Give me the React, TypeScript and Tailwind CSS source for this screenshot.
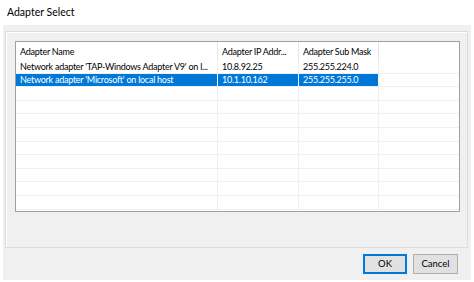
const columns = [
  { title: 'Adapter Name', width: 'w-[202px]' },
  { title: 'Adapter IP Addr...', width: 'w-[81px]' },
  { title: 'Adapter Sub Mask', width: 'w-[80px]' },
];

const rows = [
  ["Network adapter 'TAP-Windows Adapter V9' on l...", '10.8.92.25', '255.255.224.0'],
  ["Network adapter 'Microsoft' on local host", '10.1.10.162', '255.255.255.0'],
];

const widths = ['w-[202px]', 'w-[81px]', 'w-[80px]'];

const App = () => {
  const emptyRows = Array.from({ length: 10 });

  return (
    <div
      className="w-[474px] h-[282px] bg-white flex flex-col overflow-hidden text-black"
      style={{ fontFamily: 'Lato, "Noto Sans", sans-serif' }}
    >
      <div className="h-[25px] shrink-0 flex items-center pl-[7px] text-[10.5px]">Adapter Select</div>

      <div className="mx-[3px] h-[255px] bg-[#f0f0f0] flex flex-col">
        <div className="mt-[6px] ml-[2px] mr-[3px] h-[217px] border border-[#dcdcdc] shadow-[inset_1px_1px_0_#ffffff] pt-[9px] pl-[9px] pr-[7px]">
          <div className="h-[171px] bg-white border border-[#a0a0a0] overflow-hidden text-[9px] tracking-[-0.25px] leading-none">
            {/* header */}
            <div className="flex h-[18px]">
              {columns.map((c) => (
                <div
                  key={c.title}
                  className={`${c.width} shrink-0 border-r border-[#e5e5e5] flex items-center pl-[4px] whitespace-nowrap overflow-hidden`}
                >
                  {c.title}
                </div>
              ))}
              <div className="flex-1" />
            </div>

            {rows.map((r, i) => {
              const selected = i === 1;
              return (
                <div key={i} className="flex h-[13.6px] border-b border-[#f0f0f0]">
                  {r.map((cell, j) => (
                    <div
                      key={j}
                      className={`${widths[j]} shrink-0 border-r flex items-center pl-[4px] whitespace-nowrap overflow-hidden ${
                        selected ? 'bg-[#0078d7] text-white border-white' : 'border-[#f0f0f0]'
                      }`}
                    >
                      {cell}
                    </div>
                  ))}
                  <div className="flex-1" />
                </div>
              );
            })}

            {emptyRows.map((_, i) => (
              <div key={i} className="flex h-[13.6px] border-b border-[#f0f0f0]">
                {widths.map((w, j) => (
                  <div key={j} className={`${w} shrink-0 border-r border-[#f0f0f0]`} />
                ))}
                <div className="flex-1" />
              </div>
            ))}
          </div>
        </div>

        <div className="flex justify-end gap-[6px] mt-[6px] mr-[13px] text-[9.5px]">
          <button className="w-[44px] h-[20px] bg-[#e1e1e1] border-2 border-[#0078d7] flex items-center justify-center">
            OK
          </button>
          <button className="w-[45px] h-[20px] bg-[#e1e1e1] border border-[#adadad] flex items-center justify-center">
            Cancel
          </button>
        </div>
      </div>
    </div>
  );
};

export default App;
